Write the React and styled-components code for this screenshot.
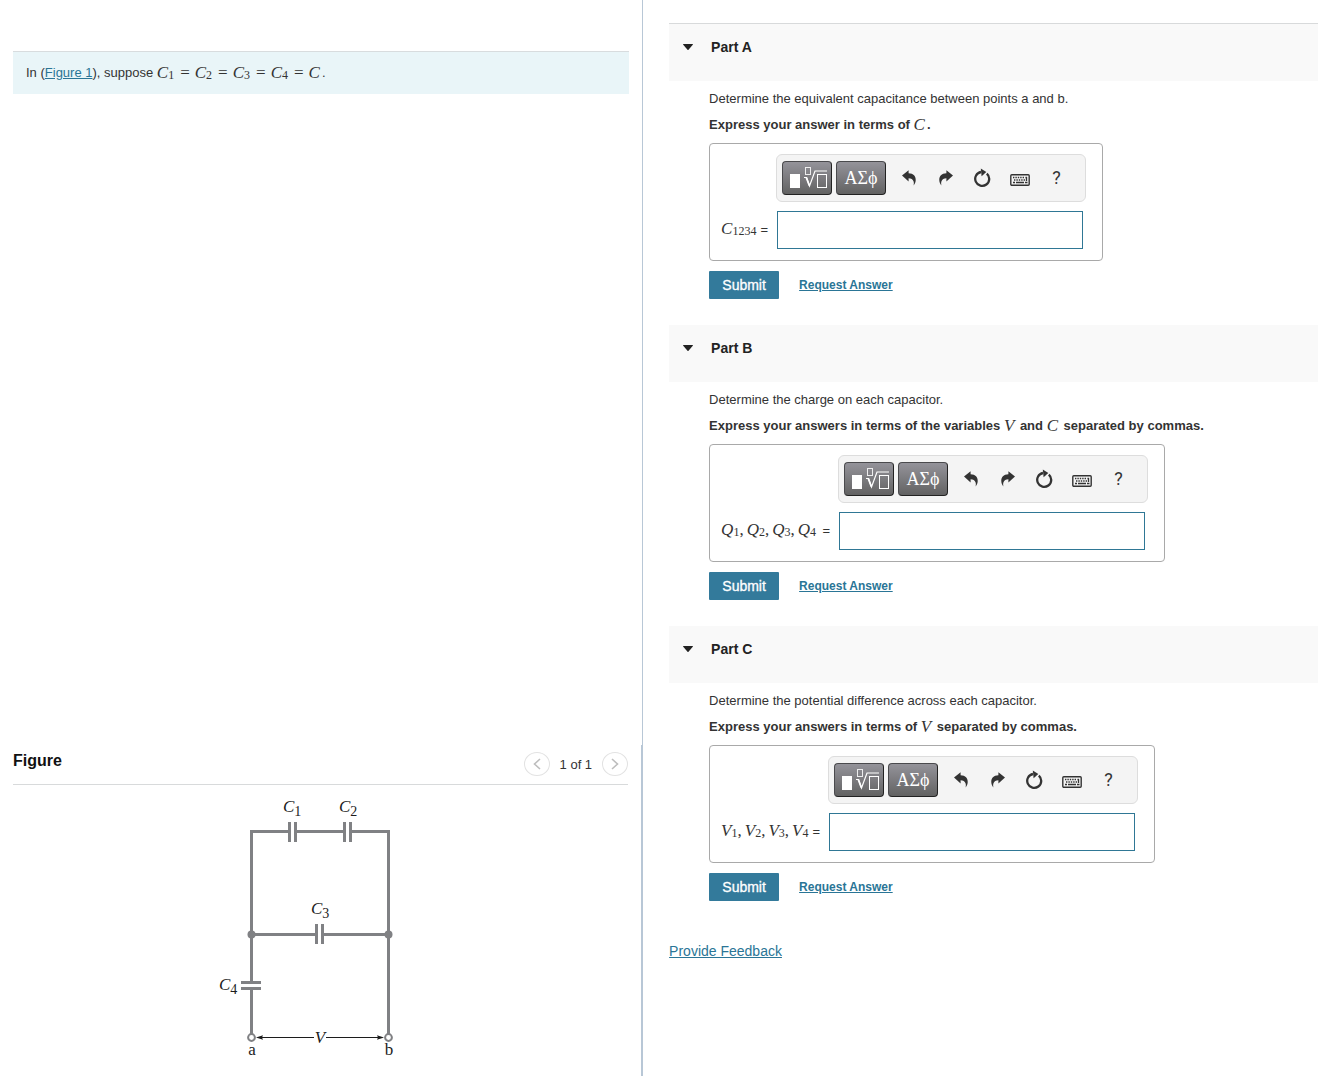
import React, { useState } from "react";
import styled, { createGlobalStyle } from "styled-components";

const GlobalStyle = createGlobalStyle`
  *, *::before, *::after { box-sizing: border-box; }
  body {
    margin: 0;
    background: #fff;
    color: #333;
    font-family: "Liberation Sans", Arial, sans-serif;
    font-size: 13px;
    line-height: 18px;
  }
  button, input { font: inherit; }
`;

const Page = styled.div`
  display: grid;
  grid-template-columns: minmax(0, 19fr) minmax(0, 20fr);
  min-height: 100vh;
`;

const ProblemPane = styled.section`
  display: flex;
  flex-direction: column;
`;

const AnswerPane = styled.main`
  border-left: 1px solid #b8c7d6;
  padding: 23px 0 26px 26px;
`;

const IntroArea = styled.div`
  flex: 1;
  padding: 51px 13px 24px;
`;

const Intro = styled.p`
  margin: 0;
  padding: 12px 13px;
  border-top: 1px solid #d8dcde;
  background: #e9f5f8;
`;

const Link = styled.a`
  color: #2a7596;
  text-decoration: underline;
`;

const FigureArea = styled.section`
  border-right: 1px solid #b8c7d6;
  padding: 0 13px 11px;
`;

const FigureHeader = styled.header`
  display: flex;
  align-items: flex-start;
  justify-content: space-between;
  height: 40px;
  border-bottom: 1px solid #d8dadb;
`;

const FigureTitle = styled.h2`
  margin: 0;
  padding-top: 7px;
  font-size: 16px;
  line-height: 18px;
  color: #111;
`;

const Pager = styled.nav`
  display: flex;
  align-items: center;
  gap: 10px;
  padding-top: 7px;
`;

const PagerCount = styled.span`
  padding-top: 2px;
`;

const PagerButton = styled.button`
  display: grid;
  place-items: center;
  width: 26px;
  height: 24px;
  padding: 0;
  border: 1px solid #e2e2e2;
  border-radius: 50%;
  background: #fff;
  color: #bdbdbd;
`;

const Diagram = styled.svg`
  display: block;
  width: 221px;
  height: 280px;
  margin: 0 auto;
  font-family: "Liberation Serif", serif;
  font-size: 17px;
  fill: #1c1c1c;
`;

const Expression = styled.span`
  font-family: "Liberation Serif", "Times New Roman", serif;
  font-size: 17px;
  font-weight: 400;
  line-height: 0;
  vertical-align: -1px;
  white-space: nowrap;
`;

const Symbol = styled(Expression)`
  margin-right: 2px;
`;

const Subscript = styled.sub`
  font-size: 12px;
  line-height: 0;
  vertical-align: -1px;
`;

const Relation = styled.span`
  margin: 0 5px 0 6px;
`;

const Comma = styled.span`
  margin-right: 3px;
`;

const PartHeader = styled.header`
  padding: 14px 14px 25px;
  background: #f9f9f9;
`;

const Part = styled.section`
  &:first-child > ${PartHeader} {
    border-top: 1px solid #d8dadb;
  }
`;

const PartTitle = styled.h2`
  margin: 0;
  font-size: 14px;
  line-height: 18px;
`;

const PartToggle = styled.button`
  display: flex;
  align-items: center;
  gap: 18px;
  padding: 0;
  border: 0;
  background: none;
  color: #222;
`;

const Arrow = styled.svg`
  transform: rotate(${(p) => (p.$open ? 0 : -90)}deg);
`;

const PartBody = styled.div`
  padding: 9px 16px 26px 40px;
`;

const Question = styled.p`
  margin: 0 0 8px;
`;

const Instruction = styled.p`
  margin: 0 0 9px;
  font-weight: 700;
`;

const AnswerBox = styled.div`
  display: inline-grid;
  grid-template-columns: ${(p) => p.$labelWidth}px 310px;
  row-gap: 9px;
  padding: 10px 16px 11px 11px;
  border: 1px solid #a9a9a9;
  border-radius: 4px;
  vertical-align: top;
`;

const Toolbar = styled.div`
  grid-column: 2;
  display: flex;
  align-items: center;
  gap: 4px;
  height: 48px;
  padding: 0 5px;
  border: 1px solid #ddd;
  border-radius: 6px;
  background: #f4f4f4;
`;

const PaletteButton = styled.button`
  display: grid;
  place-items: center;
  width: 50px;
  height: 34px;
  padding: 0;
  border: 1px solid #4a4a4d;
  border-right-color: #222;
  border-bottom-color: #222;
  border-radius: 4px;
  background: linear-gradient(#94939a, #626262);
  color: #fff;
  font-family: "Liberation Serif", serif;
  font-size: 18px;
  line-height: 24px;
`;

const ToolGroup = styled.div`
  display: flex;
`;

const ToolButton = styled.button`
  display: grid;
  place-items: center;
  width: 37px;
  height: 34px;
  padding: 0;
  border: 0;
  background: none;
  color: #333;
  font-family: Roboto, sans-serif;
  font-size: 18px;
`;

const AnswerLabel = styled.label`
  display: flex;
  align-items: center;
  justify-content: space-between;
  padding-right: 8px;
`;

const AnswerInput = styled.input`
  width: 306px;
  height: 38px;
  margin-left: 1px;
  padding: 4px 8px;
  border: 1px solid #2f7795;
  border-radius: 0;
  background: #fff;
`;

const Actions = styled.div`
  display: flex;
  align-items: center;
  gap: 20px;
  margin-top: 10px;
`;

const Submit = styled.button`
  width: 70px;
  height: 28px;
  padding: 0;
  border: 0;
  border-radius: 1px;
  background: #337a9b;
  color: #fff;
  font-size: 14px;
  -webkit-text-stroke: 0.3px #fff;
`;

const RequestLink = styled(Link)`
  font-size: 12px;
  font-weight: 700;
`;

const Feedback = styled.footer`
  padding-top: 15px;
  font-size: 14px;
`;

function Var({ name, sub }) {
  return (
    <>
      <i>{name}</i>
      {sub && <Subscript>{sub}</Subscript>}
    </>
  );
}

function VarList({ name }) {
  return ["1", "2", "3", "4"].map((n) => (
    <React.Fragment key={n}>
      <Var name={name} sub={n} />
      {n !== "4" && <Comma>,</Comma>}
    </React.Fragment>
  ));
}

function Chevron({ d }) {
  return (
    <svg width="8" height="12" viewBox="0 0 8 12" fill="none" stroke="currentColor" strokeWidth="1.6">
      <path d={d} />
    </svg>
  );
}

function TemplateIcon() {
  return (
    <svg width="48" height="32" viewBox="1 1 48 32" fill="none" stroke="#fff">
      <rect x="8" y="13" width="10" height="14" fill="#fff" stroke="none" />
      <rect x="23.5" y="6.5" width="5" height="7" strokeWidth="1" opacity=".85" />
      <path d="M22 16.5h2.5l3 8.500 5.5-15H45" strokeWidth="1.2" />
      <path d="M24.3 16.5l3 8" strokeWidth="1.8" />
      <rect x="35.5" y="13.500" width="9" height="13" strokeWidth="1" />
    </svg>
  );
}

function UndoIcon({ flip }) {
  return (
    <svg width="14" height="16" viewBox="0 0 14 16" fill="currentColor">
      <path
        transform={flip ? "translate(14 0) scale(-1 1)" : undefined}
        d="M0 5.5 6.6.2v3.1c4.8.2 7.4 3 7.1 7-.1 1.9-.8 3.6-2.1 5.3.3-1.8.4-3-.1-4.3-.7-2-2.3-3-4.9-3v3.1z"
      />
    </svg>
  );
}

function ResetIcon() {
  return (
    <svg width="18" height="20" viewBox="1 0 18 20" fill="none">
      <path d="M13.800 5.600A7 7 0 1 1 8 4" stroke="currentColor" strokeWidth="2.300" />
      <path d="M7.800.4 13.300 4.100 8.600 8.200z" fill="currentColor" />
    </svg>
  );
}

function KeyboardIcon() {
  return (
    <svg width="20" height="18" viewBox="0 0 20 18" fill="none" stroke="currentColor">
      <rect x=".8" y="5.8" width="18.4" height="10.4" rx="1" strokeWidth="1.4" />
      <path d="M3 8.5h11M15.5 8.5h2M4 11h11" strokeWidth="1.4" strokeDasharray="1.4 1" />
      <path d="M3 13.5h2M6 13.5h8M15 13.5h2.5M16.5 8v4" strokeWidth="1.3" />
    </svg>
  );
}

function CircuitLabel({ x, y, sub }) {
  return (
    <text x={x} y={y}>
      <tspan fontStyle="italic">C</tspan>
      <tspan dy="4" fontSize="14">{sub}</tspan>
    </text>
  );
}

function Circuit() {
  return (
    <Diagram viewBox="0 0 221 280" role="img" aria-label="Circuit with four capacitors between points a and b">
      <g fill="none" stroke="#808184" strokeWidth="3">
        <path d="M41.5 197V46.5H79M86 46.5H134M141 46.5H178.5V249M41.5 149.5H106M113 149.5H178.5M41.5 204V249" />
        <path d="M79.5 37v20M85.5 37v20M134.5 37v20M140.5 37v20M106.5 139v20M112.5 139v20M31 197.5h20M31 203.5h20" />
      </g>
      <g fill="#808184">
        <circle cx="41.5" cy="149.5" r="4" />
        <circle cx="178.5" cy="149.5" r="4" />
      </g>
      <g fill="#fff" stroke="#808184" strokeWidth="2">
        <circle cx="41.5" cy="252.5" r="3.4" />
        <circle cx="178.5" cy="252.5" r="3.4" />
      </g>
      <path d="M50 252.5H104M116 252.5H170" stroke="#1c1c1c" />
      <path d="M46 252.5l7-2.3-1 2.3 1 2.3zM174 252.5l-7-2.3 1 2.3-1 2.3z" />
      <CircuitLabel x="73" y="27" sub="1" />
      <CircuitLabel x="129" y="27" sub="2" />
      <CircuitLabel x="101" y="129" sub="3" />
      <CircuitLabel x="9" y="205" sub="4" />
      <text x="110" y="258" textAnchor="middle" fontStyle="italic">V</text>
      <text x="42" y="270" textAnchor="middle">a</text>
      <text x="179" y="270" textAnchor="middle">b</text>
    </Diagram>
  );
}

function AnswerPart({ id, title, question, instruction, label, labelWidth }) {
  const [open, setOpen] = useState(true);
  const inputId = `answer-${id}`;
  return (
    <Part>
      <PartHeader>
        <PartTitle>
          <PartToggle type="button" aria-expanded={open} onClick={() => setOpen(!open)}>
            <Arrow $open={open} width="10" height="6" viewBox="0 0 10 6" fill="currentColor">
              <path d="M0 .5Q0 0 .5 0h9q.5 0 .5.5L5.5 5.7q-.5.5-1 0z" />
            </Arrow>
            {title}
          </PartToggle>
        </PartTitle>
      </PartHeader>
      {open && (
        <PartBody>
          <Question>{question}</Question>
          <Instruction>{instruction}</Instruction>
          <AnswerBox $labelWidth={labelWidth}>
            <Toolbar role="toolbar" aria-label="Equation tools">
              <PaletteButton type="button" aria-label="Templates"><TemplateIcon /></PaletteButton>
              <PaletteButton type="button">ΑΣϕ</PaletteButton>
              <ToolGroup>
                <ToolButton type="button" aria-label="Undo"><UndoIcon /></ToolButton>
                <ToolButton type="button" aria-label="Redo"><UndoIcon flip /></ToolButton>
                <ToolButton type="button" aria-label="Reset"><ResetIcon /></ToolButton>
                <ToolButton type="button" aria-label="Keyboard shortcuts"><KeyboardIcon /></ToolButton>
                <ToolButton type="button">?</ToolButton>
              </ToolGroup>
            </Toolbar>
            <AnswerLabel htmlFor={inputId}>
              <Expression>{label}</Expression>
              <span>=</span>
            </AnswerLabel>
            <AnswerInput id={inputId} type="text" />
          </AnswerBox>
          <Actions>
            <Submit type="button">Submit</Submit>
            <RequestLink href="#request">Request Answer</RequestLink>
          </Actions>
        </PartBody>
      )}
    </Part>
  );
}

const C = <Symbol><Var name="C" /></Symbol>;
const V = <Symbol><Var name="V" /></Symbol>;

const parts = [
  {
    id: "a",
    title: "Part A",
    question: "Determine the equivalent capacitance between points a and b.",
    instruction: <>Express your answer in terms of {C}.</>,
    label: <Var name="C" sub="1234" />,
    labelWidth: 55,
  },
  {
    id: "b",
    title: "Part B",
    question: "Determine the charge on each capacitor.",
    instruction: <>Express your answers in terms of the variables {V} and {C} separated by commas.</>,
    label: <VarList name="Q" />,
    labelWidth: 117,
  },
  {
    id: "c",
    title: "Part C",
    question: "Determine the potential difference across each capacitor.",
    instruction: <>Express your answers in terms of {V} separated by commas.</>,
    label: <VarList name="V" />,
    labelWidth: 107,
  },
];

export default function App() {
  return (
    <>
      <GlobalStyle />
      <Page>
        <ProblemPane>
          <IntroArea>
            <Intro>
              In (<Link href="#figure">Figure 1</Link>), suppose{" "}
              <Symbol>
                {["1", "2", "3", "4"].map((n) => (
                  <React.Fragment key={n}>
                    <Var name="C" sub={n} />
                    <Relation>=</Relation>
                  </React.Fragment>
                ))}
                <Var name="C" />
              </Symbol>
              .
            </Intro>
          </IntroArea>
          <FigureArea id="figure">
            <FigureHeader>
              <FigureTitle>Figure</FigureTitle>
              <Pager aria-label="Figures">
                <PagerButton type="button" aria-label="Previous figure"><Chevron d="M7 1 1.5 6 7 11" /></PagerButton>
                <PagerCount>1 of 1</PagerCount>
                <PagerButton type="button" aria-label="Next figure"><Chevron d="M1 1 6.5 6 1 11" /></PagerButton>
              </Pager>
            </FigureHeader>
            <Circuit />
          </FigureArea>
        </ProblemPane>
        <AnswerPane>
          {parts.map((part) => (
            <AnswerPart key={part.id} {...part} />
          ))}
          <Feedback>
            <Link href="#feedback">Provide Feedback</Link>
          </Feedback>
        </AnswerPane>
      </Page>
    </>
  );
}
